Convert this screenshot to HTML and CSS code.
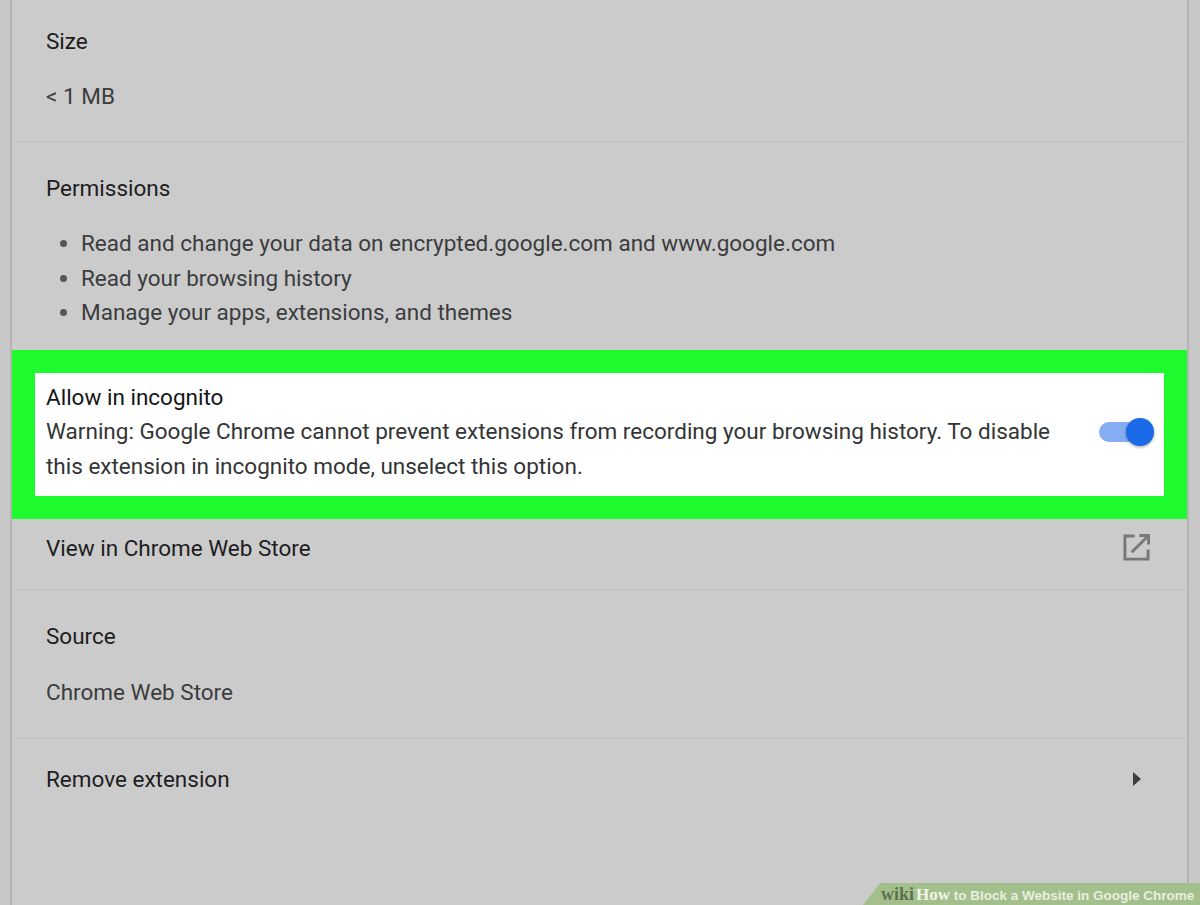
FILE: index.html
```html
<!DOCTYPE html>
<html lang="en">
<head>
  <meta charset="UTF-8">
  <title>How to Block a Website in Google Chrome</title>
  <link rel="stylesheet" href="styles.css">
</head>
<body>

  <main class="panel">

    <section class="block block-size">
      <div class="label">Size</div>
      <div class="value">&lt; 1 MB</div>
    </section>

    <section class="block block-perms">
      <div class="label">Permissions</div>
      <ul class="perms">
        <li>Read and change your data on encrypted.google.com and www.google.com</li>
        <li>Read your browsing history</li>
        <li>Manage your apps, extensions, and themes</li>
      </ul>
    </section>

    <!-- recuadro verde -->
    <section class="highlight">
      <div class="highlight-inner">
        <div class="incognito-text">
          <div class="incognito-title">Allow in incognito</div>
          <div class="incognito-warning">Warning: Google Chrome cannot prevent extensions from recording your browsing history. To disable this extension in incognito mode, unselect this option.</div>
        </div>
        <div class="toggle">
          <span class="toggle-track"></span>
          <span class="toggle-knob"></span>
        </div>
      </div>
    </section>

    <section class="row row-store">
      <div class="label">View in Chrome Web Store</div>
      <svg class="open-icon" viewBox="0 0 28 28" width="27" height="27">
        <path d="M12 2H2v24h24V16" fill="none" stroke="#75777a" stroke-width="3"/>
        <path d="M17 1.500h9.500V11" fill="none" stroke="#75777a" stroke-width="3"/>
        <path d="M26 2L9 19" fill="none" stroke="#75777a" stroke-width="3"/>
      </svg>
    </section>

    <section class="block block-source">
      <div class="label">Source</div>
      <div class="value">Chrome Web Store</div>
    </section>

    <section class="row row-remove">
      <div class="label">Remove extension</div>
      <span class="arrow"></span>
    </section>

  </main>

  <div class="watermark">
    <span class="wiki">wiki</span><span class="how">How</span><span class="title"> to Block a Website in Google Chrome</span>
  </div>

</body>
</html>
```

FILE: styles.css
```css
* {
  margin: 0;
  padding: 0;
  box-sizing: border-box;
}

body {
  background: #c7c7c7;
  width: 1200px;
  height: 905px;
  overflow: hidden;
  font-family: Roboto, "Liberation Sans", sans-serif;
  font-size: 22.500px;
  line-height: 34px;
  color: #2b2c2e;
  position: relative;
}

.panel {
  width: 1179px;
  height: 905px;
  margin-left: 10px;
  background: #cbcbcb;
  border-left: 2px solid #b4b4b4;
  border-right: 2px solid #b4b4b4;
}

.label {
  color: #1d1d1f;
}

.value {
  margin-top: 21px;
  color: #3b3c3e;
}

.block {
  padding: 24px 34px 28px;
  border-bottom: 2px solid #c5c5c5;
}

.block-perms {
  padding-top: 28px;
  padding-bottom: 20px;
  border-bottom: none;
}

.block-source {
  padding-top: 28px;
  padding-bottom: 28px;
}

.block-source .value {
  margin-top: 22px;
}

.perms {
  margin-top: 21px;
  list-style: none;
  color: #3b3c3e;
}

.perms li {
  position: relative;
  padding-left: 35px;
  line-height: 34.700px;
}

.perms li::before {
  content: "";
  position: absolute;
  left: 14px;
  top: 14px;
  width: 7px;
  height: 7px;
  border-radius: 50%;
  background: #55565a;
}

.highlight {
  height: 169px;
  background: #1dfb2f;
  padding: 23px;
}

.highlight-inner {
  height: 123px;
  background: #fff;
  display: flex;
  align-items: flex-start;
  padding: 7px 10px 0 11px;
}

.incognito-text {
  width: 1030px;
}

.incognito-title {
  color: #151517;
}

.incognito-warning {
  color: #333436;
  line-height: 35px;
}

.toggle {
  position: relative;
  width: 55px;
  height: 28px;
  margin-top: 38px;
  margin-left: auto;
}

.toggle-track {
  position: absolute;
  left: 0;
  top: 4px;
  width: 50px;
  height: 20px;
  border-radius: 10px;
  background: #86adf3;
}

.toggle-knob {
  position: absolute;
  right: 0;
  top: 0;
  width: 28px;
  height: 28px;
  border-radius: 50%;
  background: #1a6ae8;
  box-shadow: 0 1px 3px rgba(0, 0, 0, 0.4);
}

.row {
  display: flex;
  justify-content: space-between;
  border-bottom: 2px solid #c5c5c5;
}

.row-store {
  height: 72px;
  padding: 12px 37px 0 34px;
}

.open-icon {
  margin-top: 3px;
}

.row-remove {
  border-bottom: none;
  padding: 23px 46px 0 34px;
}

.arrow {
  margin-top: 10px;
  width: 0;
  height: 0;
  border-left: 8px solid #3c3d40;
  border-top: 7px solid transparent;
  border-bottom: 7px solid transparent;
}

.watermark {
  position: absolute;
  right: 0;
  bottom: 0;
  width: 337px;
  height: 22px;
  padding-left: 18px;
  background: #a3bf8b;
  clip-path: polygon(17px 0, 100% 0, 100% 100%, 0 100%);
  font-family: "Liberation Sans", sans-serif;
  font-size: 13.500px;
  line-height: 22px;
  white-space: nowrap;
  color: #e8efe0;
}

.wiki,
.how {
  font-family: "Liberation Serif", serif;
  font-weight: bold;
  font-size: 17px;
}

.wiki {
  font-size: 18px;
  color: #5c7150;
}

.how {
  margin-left: 2px;
  color: #f1f5ea;
}

.title {
  font-weight: bold;
}
```
